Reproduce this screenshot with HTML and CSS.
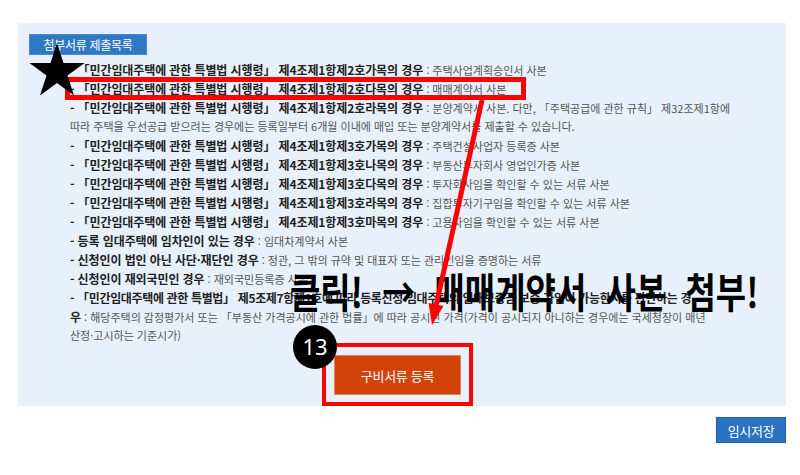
FILE: index.html
```html
<!DOCTYPE html>
<html lang="ko">
<head>
<meta charset="utf-8">
<title>첨부서류 제출목록</title>
<link rel="stylesheet" href="styles.css">
</head>
<body>
<div class="page">
  <section class="panel">
    <div class="tab">첨부서류 제출목록</div>
    <div class="list">
      <p class="ln"><b>- 「민간임대주택에 관한 특별법 시행령」 제4조제1항제2호가목의 경우</b> : 주택사업계획승인서 사본</p>
      <p class="ln"><b>- 「민간임대주택에 관한 특별법 시행령」 제4조제1항제2호다목의 경우</b> : 매매계약서 사본</p>
      <p class="ln"><b>- 「민간임대주택에 관한 특별법 시행령」 제4조제1항제2호라목의 경우</b> : 분양계약서 사본. 다만, 「주택공급에 관한 규칙」 제32조제1항에</p>
      <p class="ln">따라 주택을 우선공급 받으려는 경우에는 등록일부터 6개월 이내에 매입 또는 분양계약서를 제출할 수 있습니다.</p>
      <p class="ln"><b>- 「민간임대주택에 관한 특별법 시행령」 제4조제1항제3호가목의 경우</b> : 주택건설사업자 등록증 사본</p>
      <p class="ln"><b>- 「민간임대주택에 관한 특별법 시행령」 제4조제1항제3호나목의 경우</b> : 부동산투자회사 영업인가증 사본</p>
      <p class="ln"><b>- 「민간임대주택에 관한 특별법 시행령」 제4조제1항제3호다목의 경우</b> : 투자회사임을 확인할 수 있는 서류 사본</p>
      <p class="ln"><b>- 「민간임대주택에 관한 특별법 시행령」 제4조제1항제3호라목의 경우</b> : 집합투자기구임을 확인할 수 있는 서류 사본</p>
      <p class="ln"><b>- 「민간임대주택에 관한 특별법 시행령」 제4조제1항제3호마목의 경우</b> : 고용자임을 확인할 수 있는 서류 사본</p>
      <p class="ln"><b>- 등록 임대주택에 임차인이 있는 경우</b> : 임대차계약서 사본</p>
      <p class="ln"><b>- 신청인이 법인 아닌 사단·재단인 경우</b> : 정관, 그 밖의 규약 및 대표자 또는 관리인임을 증명하는 서류</p>
      <p class="ln"><b>- 신청인이 재외국민인 경우</b> : 재외국민등록증 사본</p>
      <p class="ln"><b class="tight">- 「민간임대주택에 관한 특별법」 제5조제7항제1호에 따라 등록신청 임대주택의 임대보증금 보증 가입이 가능한지를 판단하는 경</b></p>
      <p class="ln"><b>우</b> : 해당주택의 감정평가서 또는 「부동산 가격공시에 관한 법률」에 따라 공시된 가격(가격이 공시되지 아니하는 경우에는 국세청장이 매년</p>
      <p class="ln">산정·고시하는 기준시가)</p>
    </div>
    <div class="actions">
      <button class="btn-submit" type="button">구비서류 등록</button>
    </div>
  </section>
  <div class="footer">
    <button class="btn-save" type="button">임시저장</button>
  </div>

  <div class="mark mark-row"></div>
  <div class="mark mark-btn"></div>
  <div class="badge">13</div>
  <div class="note">클릭! → 매매계약서 사본 첨부!</div>
  <svg class="draw" width="800" height="475" viewBox="0 0 800 475">
    <polygon points="57,43 63.5,63 84.6,63 67.5,75.4 74,95.5 57,83.1 40,95.5 46.5,75.4 29.4,63 50.5,63" fill="#000"/>
    <line x1="482" y1="100" x2="436" y2="306" stroke="#ff0000" stroke-width="5"/>
    <polygon points="432,325 443.5,306 428.5,303" fill="#ff0000"/>
  </svg>
</div>
</body>
</html>
```
FILE: styles.css
```css
* { box-sizing: border-box; }
html, body { margin: 0; padding: 0; background: #fff; }
body {
  font-family: "Noto Sans CJK KR", "Noto Sans", sans-serif;
}
.page {
  position: relative;
  width: 800px;
  height: 475px;
  overflow: hidden;
  padding-top: 23px;
  padding-left: 18px;
}
.panel {
  width: 768px;
  height: 383px;
  background: #e8f0fc;
  padding: 11px;
  display: flex;
  flex-direction: column;
}
.tab {
  align-self: flex-start;
  width: 118px;
  height: 21px;
  background: #2f78c4;
  border: 1px solid #4a8ad0;
  color: #fff;
  font-size: 12px;
  line-height: 19px;
  text-align: center;
  letter-spacing: -0.3px;
}
.list {
  margin-top: 5px;
  margin-left: 41px;
}
.ln {
  margin: 0;
  height: 19px;
  line-height: 19px;
  white-space: nowrap;
  font-size: 11px;
  letter-spacing: 0;
  color: #555;
}
.ln b {
  font-size: 12px;
  font-weight: 700;
  letter-spacing: -0.1px;
  color: #222;
}
.ln b.tight {
  letter-spacing: -0.35px;
}
.actions {
  margin-top: 10px;
  display: flex;
  justify-content: center;
  padding-right: 9px;
}
.btn-submit {
  width: 127px;
  height: 40px;
  background: #d2430a;
  border: 1px solid #e58058;
  color: #fff;
  font-family: "Noto Sans CJK KR", sans-serif;
  font-size: 13px;
  letter-spacing: -0.3px;
  padding: 0;
}
.footer {
  width: 768px;
  margin-top: 11px;
  display: flex;
  justify-content: flex-end;
}
.btn-save {
  width: 70px;
  height: 26px;
  background: #2a73c0;
  border: 1px solid #1f5f9f;
  color: #fff;
  font-family: "Noto Sans CJK KR", sans-serif;
  font-size: 13px;
  letter-spacing: -0.3px;
  padding: 0;
}
.mark {
  position: absolute;
  border: 5px solid #ff0000;
}
.mark-row {
  left: 65px;
  top: 77px;
  width: 461px;
  height: 23px;
}
.mark-btn {
  left: 322px;
  top: 343px;
  width: 151px;
  height: 63px;
  border-width: 4px;
}
.badge {
  position: absolute;
  left: 293px;
  top: 325px;
  width: 44px;
  height: 44px;
  border-radius: 50%;
  background: #000;
  color: #fff;
  font-family: "Noto Sans", sans-serif;
  font-size: 22px;
  line-height: 42px;
  text-align: center;
}
.note {
  position: absolute;
  left: 290px;
  top: 268px;
  font-size: 33px;
  font-weight: 700;
  line-height: 44px;
  word-spacing: 10px;
  color: #000;
  white-space: nowrap;
  transform: scaleY(1.25);
  transform-origin: left center;
}
.draw {
  position: absolute;
  left: 0;
  top: 0;
  pointer-events: none;
}
```
